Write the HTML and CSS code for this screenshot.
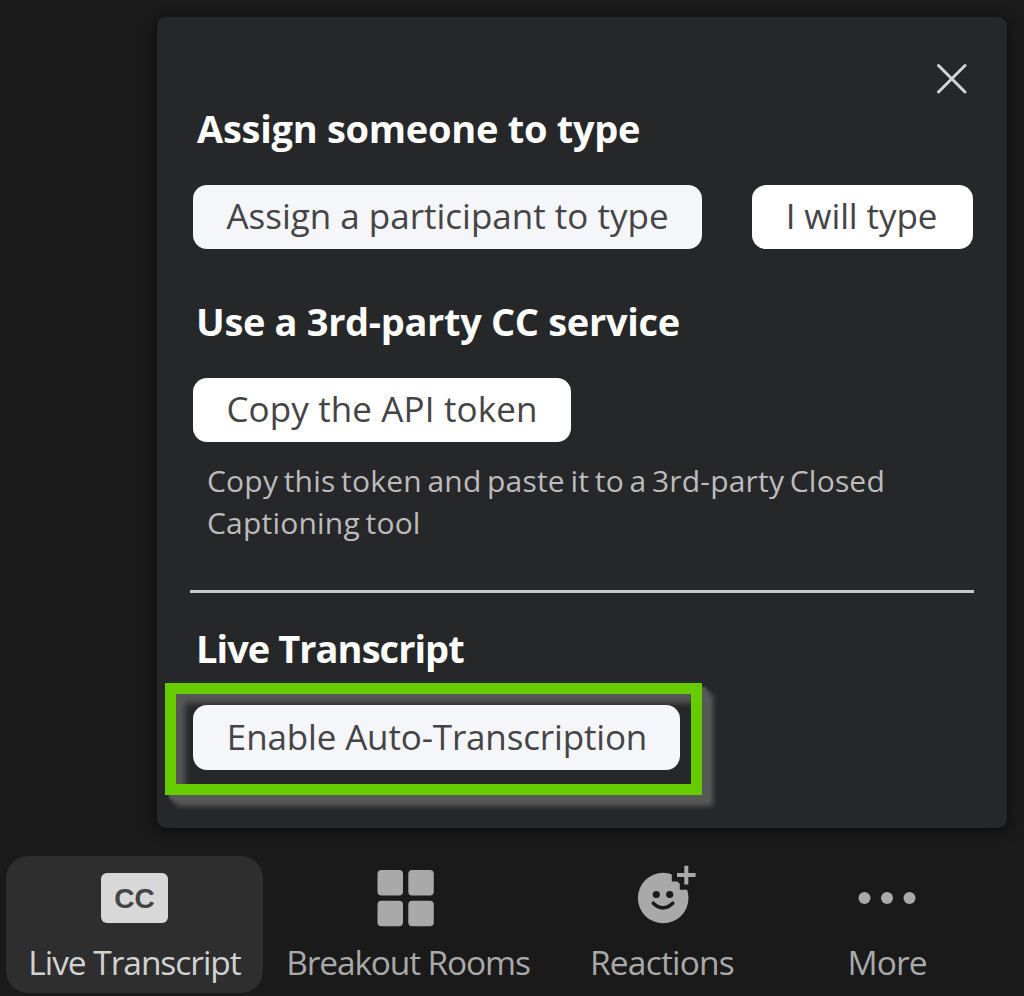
FILE: index.html
```
<!DOCTYPE html>
<html lang="en">
<head>
  <meta charset="utf-8">
  <title>Live Transcript</title>
  <meta name="viewport" content="width=device-width, initial-scale=1">
  <link rel="stylesheet" href="styles.css">
</head>
<body>

  <!-- =========== POPUP =========== -->
  <main class="panel">
    <div class="panel-top">
      <button class="close" aria-label="Close">
        <svg width="32" height="32" viewBox="0 0 32 32" fill="none" stroke="#d4d4d4" stroke-width="3" stroke-linecap="round">
          <path d="M2.5 3.5l26.5 26.5M29 3.5l-26.5 26.5"/>
        </svg>
      </button>
    </div>

    <section class="group">
      <h2 class="title-assign">Assign someone to type</h2>
      <div class="row">
        <button class="btn btn-soft btn-assign">Assign a participant to type</button>
        <button class="btn btn-self">I will type</button>
      </div>
    </section>

    <section class="group group-cc">
      <h2 class="title-cc">Use a 3rd-party CC service</h2>
      <button class="btn btn-token">Copy the API token</button>
      <p>Copy this token and paste it to a 3rd-party Closed<br>Captioning tool</p>
    </section>

    <hr>

    <section class="group group-live">
      <h2 class="title-live">Live Transcript</h2>
      <div class="highlight">
        <button class="btn btn-soft btn-enable">Enable Auto-Transcription</button>
      </div>
    </section>
  </main>

  <!-- =========== TOOLBAR =========== -->
  <nav class="toolbar">
    <div class="tool tool-live active">
      <div class="icon"><span class="cc">CC</span></div>
      <span class="label">Live Transcript</span>
    </div>
    <div class="tool tool-rooms">
      <div class="icon">
        <svg width="62" height="62" viewBox="0 0 62 62" fill="#a9a9a9">
          <rect x="0.5" y="3" width="25.5" height="25.5" rx="4"/>
          <rect x="31.3" y="3" width="25.5" height="25.5" rx="4"/>
          <rect x="0.5" y="33.8" width="25.5" height="25.5" rx="4"/>
          <rect x="31.3" y="33.8" width="25.5" height="25.5" rx="4"/>
        </svg>
      </div>
      <span class="label">Breakout Rooms</span>
    </div>
    <div class="tool tool-reactions">
      <div class="icon">
        <svg width="70" height="70" viewBox="0 0 70 70">
          <circle cx="36.2" cy="35" r="25.3" fill="#a9a9a9"/>
          <!-- gap between the face and the plus -->
          <path d="M59.3 -2v28.8M44.8 12h28.8" fill="none" stroke="#1a1a1a" stroke-width="13"/>
          <circle cx="59.3" cy="12" r="10.8" fill="#1a1a1a"/>
          <circle cx="29.3" cy="31.5" r="3.6" fill="#1a1a1a"/>
          <circle cx="42.7" cy="31.5" r="3.6" fill="#1a1a1a"/>
          <path d="M26.3 40.2Q36 49.4 45.7 40.2" fill="none" stroke="#1a1a1a" stroke-width="3.6" stroke-linecap="round"/>
          <path d="M59.3 2.8v18.6M50 12h18.6" fill="none" stroke="#a9a9a9" stroke-width="4"/>
        </svg>
      </div>
      <span class="label">Reactions</span>
    </div>
    <div class="tool tool-more">
      <div class="icon">
        <svg width="60" height="14" viewBox="0 0 60 14" fill="#a9a9a9">
          <circle cx="7.5" cy="7" r="6"/>
          <circle cx="30" cy="7" r="6"/>
          <circle cx="52.5" cy="7" r="6"/>
        </svg>
      </div>
      <span class="label">More</span>
    </div>
  </nav>

</body>
</html>
```
FILE: styles.css
```
* {
  box-sizing: border-box;
  margin: 0;
  padding: 0;
}

body {
  width: 1024px;
  height: 996px;
  overflow: hidden;
  padding-top: 17px;
  background: #1a1a1a;
  font-family: "Open Sans", "Noto Sans", sans-serif;
}

/* ===== POPUP ===== */
.panel {
  width: 850px;
  height: 811px;
  margin-left: 157px;
  padding: 45px 34px 0 36px;
  border-radius: 9px;
  background: #262729;
  box-shadow: 0 3px 14px #0009;
}

.panel-top {
  display: flex;
  justify-content: flex-end;
  height: 40px;
  padding-right: 5px;
}

.close {
  width: 32px;
  height: 32px;
  border: 0;
  background: none;
}

.close svg {
  display: block;
}

h2 {
  padding-left: 4px;
  font-size: 38px;
  font-weight: 700;
  line-height: 52px;
  color: #fff;
  white-space: nowrap;
}

.title-assign { letter-spacing: -0.28px; }

.title-cc {
  margin-left: -1px;
  letter-spacing: -0.33px;
}

.title-live {
  margin-left: -1px;
  letter-spacing: -0.95px;
}

.row {
  display: flex;
  gap: 50px;
}

.group .row,
.group > .btn {
  margin-top: 30.5px;
}

.group-cc {
  margin-top: 46px;
}

.btn {
  display: block;
  height: 64.5px;
  padding-bottom: 2px;
  border: 0;
  border-radius: 14px;
  background: #fff;
  color: #444446;
  font-family: inherit;
  font-size: 35px;
  white-space: nowrap;
}

.btn-soft { background: #f5f6f9; }
.btn-assign { width: 509px; }

.btn-self {
  width: 221px;
  padding-right: 2px;
  letter-spacing: -0.1px;
}

.btn-token {
  width: 378px;
  letter-spacing: 0.12px;
}

.btn-enable {
  width: 487px;
  padding-left: 1px;
  letter-spacing: -0.15px;
}

p {
  padding: 18px 0 0 14px;
  font-size: 30px;
  line-height: 42px;
  letter-spacing: 0.2px;
  word-spacing: -2.4px;
  color: #bcbcbd;
  white-space: nowrap;
}

hr {
  width: 784px;
  height: 3px;
  margin: 46px 0 0 -3px;
  border: 0;
  background: #c9c9ca;
}

.group-live {
  margin-top: 29px;
}

.highlight {
  width: 537px;
  height: 112px;
  margin: 9px 0 0 -28px;
  padding: 11px 17px;
  border: 11px solid #66cc00;
  box-shadow: 4px 4px 2px #585858, 7px 7px 3px #585858, 11px 11px 5px #585858,
    inset 9px 9px 6px #585858;
}

/* ===== TOOLBAR ===== */
.toolbar {
  display: flex;
  gap: 2px;
  margin: 28px 0 0 6px;
}

.tool {
  height: 137px;
  border-radius: 22px;
  text-align: center;
  color: #a9a9a9;
}

.tool.active {
  background: #2e2e2e;
  color: #d2d2d2;
}

.tool-live { width: 257px; }
.tool-rooms { width: 286px; }
.tool-reactions { width: 218px; }
.tool-more { width: 228px; }

.icon {
  display: flex;
  align-items: center;
  justify-content: center;
  height: 84px;
}

.cc {
  width: 67px;
  height: 50px;
  border-radius: 6px;
  background: #d8d8d8;
  color: #444;
  font: 700 28px/51px "Liberation Sans", Arial, sans-serif;
}

.label {
  display: block;
  margin-top: -1px;
  font-size: 33.5px;
  font-weight: 450;
  line-height: 46px;
  white-space: nowrap;
}

.tool-live .label { letter-spacing: -1.05px; }
.tool-rooms .label { letter-spacing: -1.15px; }
.tool-reactions .label { letter-spacing: -0.8px; }
.tool-more .label { letter-spacing: -0.9px; }
```
